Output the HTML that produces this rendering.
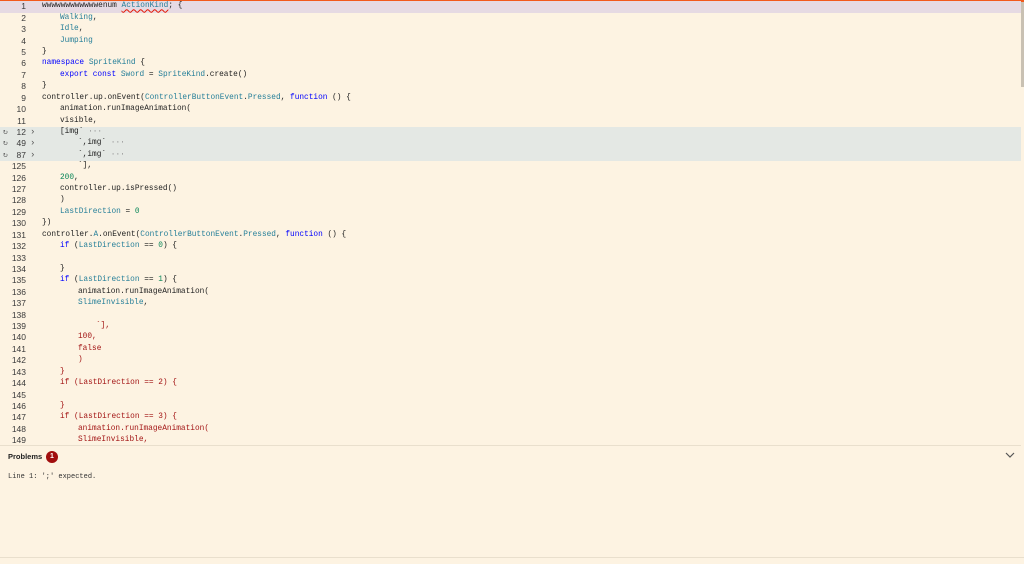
<!DOCTYPE html>
<html><head><meta charset="utf-8"><style>
body{margin:0;width:1024px;height:564px;background:#fdf3e2;overflow:hidden;position:relative;font-family:"Liberation Mono",monospace}
.top{position:absolute;left:0;top:0;width:1024px;height:2px;background:#f25a1c}
.row{position:absolute;left:0;width:1021px;height:11.42px;font-size:7.8px;line-height:11.42px;white-space:pre;color:#222}
.n{position:absolute;left:0;width:26px;text-align:right;color:#3a3a3a;font-family:"Liberation Sans",sans-serif;font-size:8.5px}
.c{position:absolute;left:42px}
.k{color:#0000ff}.t{color:#267f99}.g{color:#098658}.r{color:#a31515}
.fa{position:absolute;left:30px;color:#555;font-size:9px}
.ri{position:absolute;left:3px;color:#666;font-size:8px}
.hl1{background:#e6dae3}.hlf{background:#e4e8e4}
</style></head><body>
<div class="top"></div>
<div style="position:absolute;left:1021px;top:2px;width:3px;height:85px;background:#c9c1b3"></div>
<div id="code"></div>
<div style="position:absolute;left:0;top:445px;width:1021px;height:1px;background:#e9dfcd"></div>
<div style="position:absolute;left:8px;top:452px;font-family:'Liberation Sans',sans-serif;font-size:7.5px;font-weight:bold;color:#222">Problems</div>
<div style="position:absolute;left:46px;top:451px;width:12px;height:12px;border-radius:50%;background:#a10e0e;color:#fff;font-family:'Liberation Sans',sans-serif;font-size:7px;font-weight:bold;text-align:center;line-height:12px">1</div>
<svg style="position:absolute;left:1005px;top:451px" width="10" height="8"><path d="M1 2 L5 6 L9 2" fill="none" stroke="#555" stroke-width="1.2"/></svg>
<div style="position:absolute;left:8px;top:473px;font-size:7px;color:#333">Line 1: ';' expected.</div>
<div style="position:absolute;left:0;top:557px;width:1024px;height:1px;background:#e9dfcd"></div>
<script>
const L=[
["1",0,'wwwwwwwwwwwwenum <span class="t" style="text-decoration:underline wavy #e51400">ActionKind</span>; {',"hl1"],
["2",1,'<span class="t">Walking</span>,'],
["3",1,'<span class="t">Idle</span>,'],
["4",1,'<span class="t">Jumping</span>'],
["5",0,'}'],
["6",0,'<span class="k">namespace</span> <span class="t">SpriteKind</span> {'],
["7",1,'<span class="k">export const</span> <span class="t">Sword</span> = <span class="t">SpriteKind</span>.create()'],
["8",0,'}'],
["9",0,'controller.up.onEvent(<span class="t">ControllerButtonEvent</span>.<span class="t">Pressed</span>, <span class="k">function</span> () {'],
["10",1,'animation.runImageAnimation('],
["11",1,'visible,'],
["12",1,'[img` <span style="color:#888">···</span>',"hlf",1],
["49",2,'`,img` <span style="color:#888">···</span>',"hlf",1],
["87",2,'`,img` <span style="color:#888">···</span>',"hlf",1],
["125",2,'`],'],
["126",1,'<span class="g">200</span>,'],
["127",1,'controller.up.isPressed()'],
["128",1,')'],
["129",1,'<span class="t">LastDirection</span> = <span class="g">0</span>'],
["130",0,'})'],
["131",0,'controller.<span class="t">A</span>.onEvent(<span class="t">ControllerButtonEvent</span>.<span class="t">Pressed</span>, <span class="k">function</span> () {'],
["132",1,'<span class="k">if</span> (<span class="t">LastDirection</span> == <span class="g">0</span>) {'],
["133",1,''],
["134",1,'}'],
["135",1,'<span class="k">if</span> (<span class="t">LastDirection</span> == <span class="g">1</span>) {'],
["136",2,'animation.runImageAnimation('],
["137",2,'<span class="t">SlimeInvisible</span>,'],
["138",2,''],
["139",3,'<span class="r">`],</span>'],
["140",2,'<span class="r">100,</span>'],
["141",2,'<span class="r">false</span>'],
["142",2,'<span class="r">)</span>'],
["143",1,'<span class="r">}</span>'],
["144",1,'<span class="r">if (LastDirection == 2) {</span>'],
["145",1,''],
["146",1,'<span class="r">}</span>'],
["147",1,'<span class="r">if (LastDirection == 3) {</span>'],
["148",2,'<span class="r">animation.runImageAnimation(</span>'],
["149",2,'<span class="r">SlimeInvisible,</span>'],
];
let h='';
L.forEach((l,i)=>{
 const top=1.3+i*11.42;
 h+=`<div class="row ${l[3]||''}" style="top:${top}px"><span class="n">${l[0]}</span>${l[4]?'<span class="ri">↻</span><span class="fa">›</span>':''}<span class="c" style="left:${42+18*l[1]}px">${l[2]}</span></div>`;
});
document.getElementById('code').innerHTML=h;
</script>
</body></html>
